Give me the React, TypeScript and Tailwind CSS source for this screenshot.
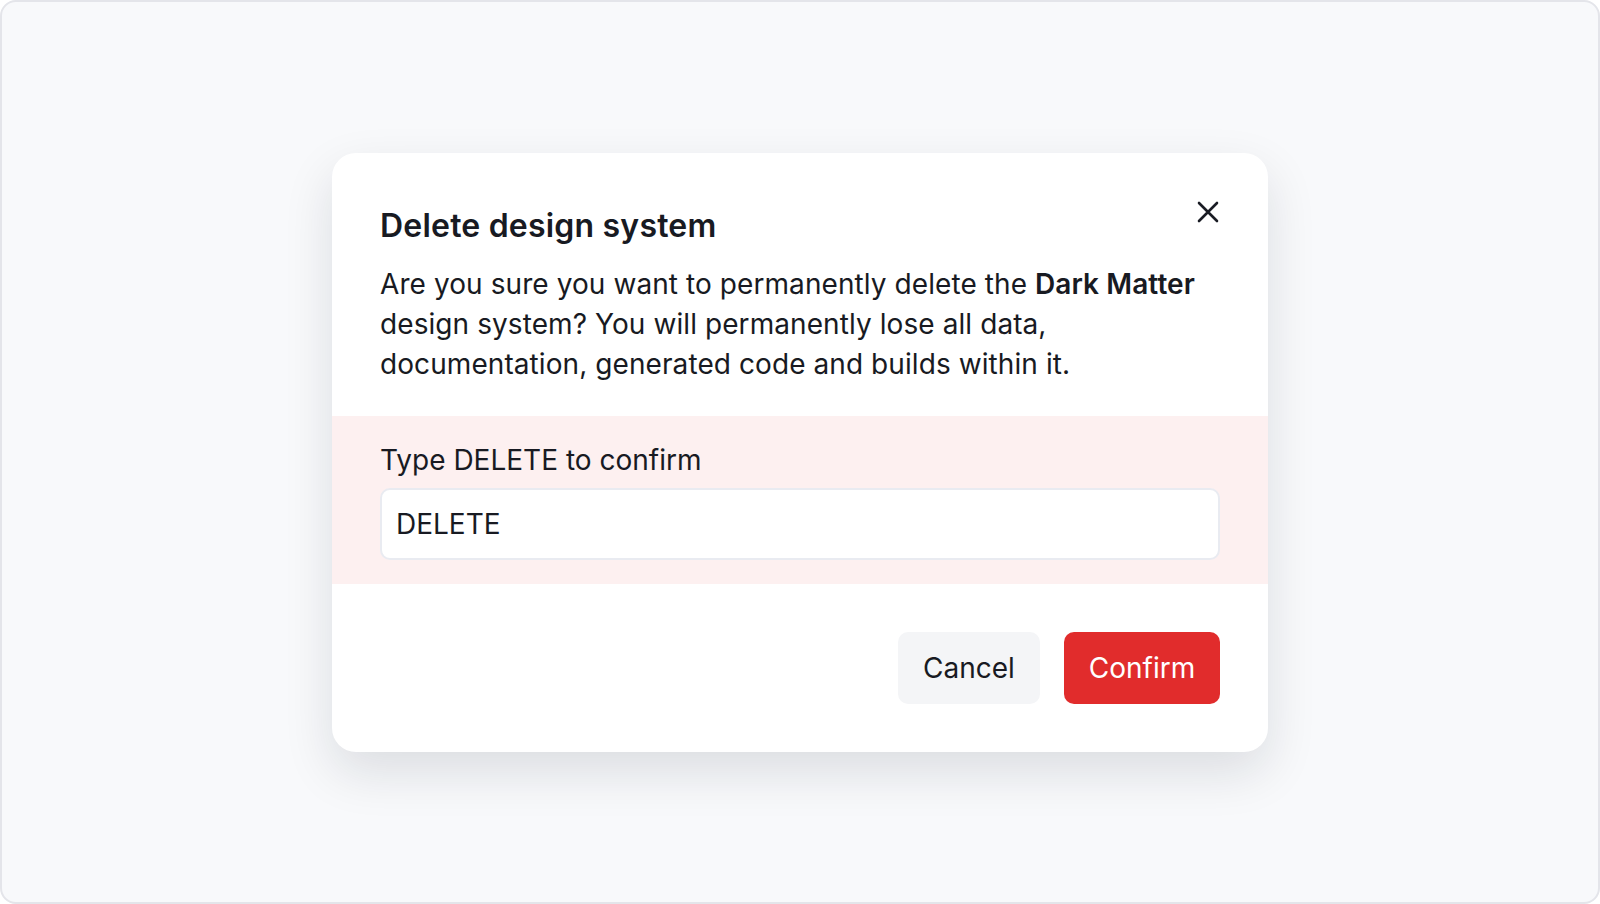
import { useState } from "react";

const CloseIcon = () => (
    <svg width="22" height="22" viewBox="0 0 22 22" fill="none">
        <path d="M2 2L20 20M20 2L2 20" stroke="#1a1c24" strokeWidth="2.6" strokeLinecap="round" />
    </svg>
);

const App = () => {
    const [value, setValue] = useState("DELETE");

    return (
        <div className="w-[1600px] h-[904px] bg-white font-['Inter',sans-serif] text-[#181a22]">
            <div className="w-full h-full bg-[#f8f9fb] border-2 border-[#e4e5ea] rounded-2xl flex items-center justify-center">
                <div className="w-[936px] bg-white rounded-3xl shadow-[0_20px_50px_rgba(17,24,39,0.12)] overflow-hidden">
                    <div className="px-12 pt-[53px] pb-8 relative">
                        <button className="absolute right-[49px] top-[48px] w-[22px] h-[22px]">
                            <CloseIcon />
                        </button>
                        <h2 className="text-[32px] leading-10 font-semibold tracking-[0.2px]">Delete design system</h2>
                        <p className="mt-[18px] text-[28px] leading-10 tracking-[0.08px]">
                            Are you sure you want to permanently delete the <span className="font-semibold">Dark Matter</span> design system? You will permanently lose all data, documentation, generated code and builds within it.
                        </p>
                    </div>

                    <div className="bg-[#fdf0f0] px-12 pt-6 pb-6 flex flex-col gap-2">
                        <label className="text-[28px] leading-10">Type DELETE to confirm</label>
                        <input
                            className="h-[72px] w-full rounded-[10px] border-2 border-[#e9ebf1] bg-white px-[14px] text-[28px] outline-none"
                            value={value}
                            onChange={(e) => setValue(e.target.value)}
                        />
                    </div>

                    <div className="p-12 flex justify-end gap-6">
                        <button className="h-[72px] w-[142px] rounded-[10px] bg-[#f4f5f7] text-[28px]">Cancel</button>
                        <button className="h-[72px] w-[156px] rounded-[10px] bg-[#e12c2c] text-white text-[28px]">Confirm</button>
                    </div>
                </div>
            </div>
        </div>
    );
};

export default App;
